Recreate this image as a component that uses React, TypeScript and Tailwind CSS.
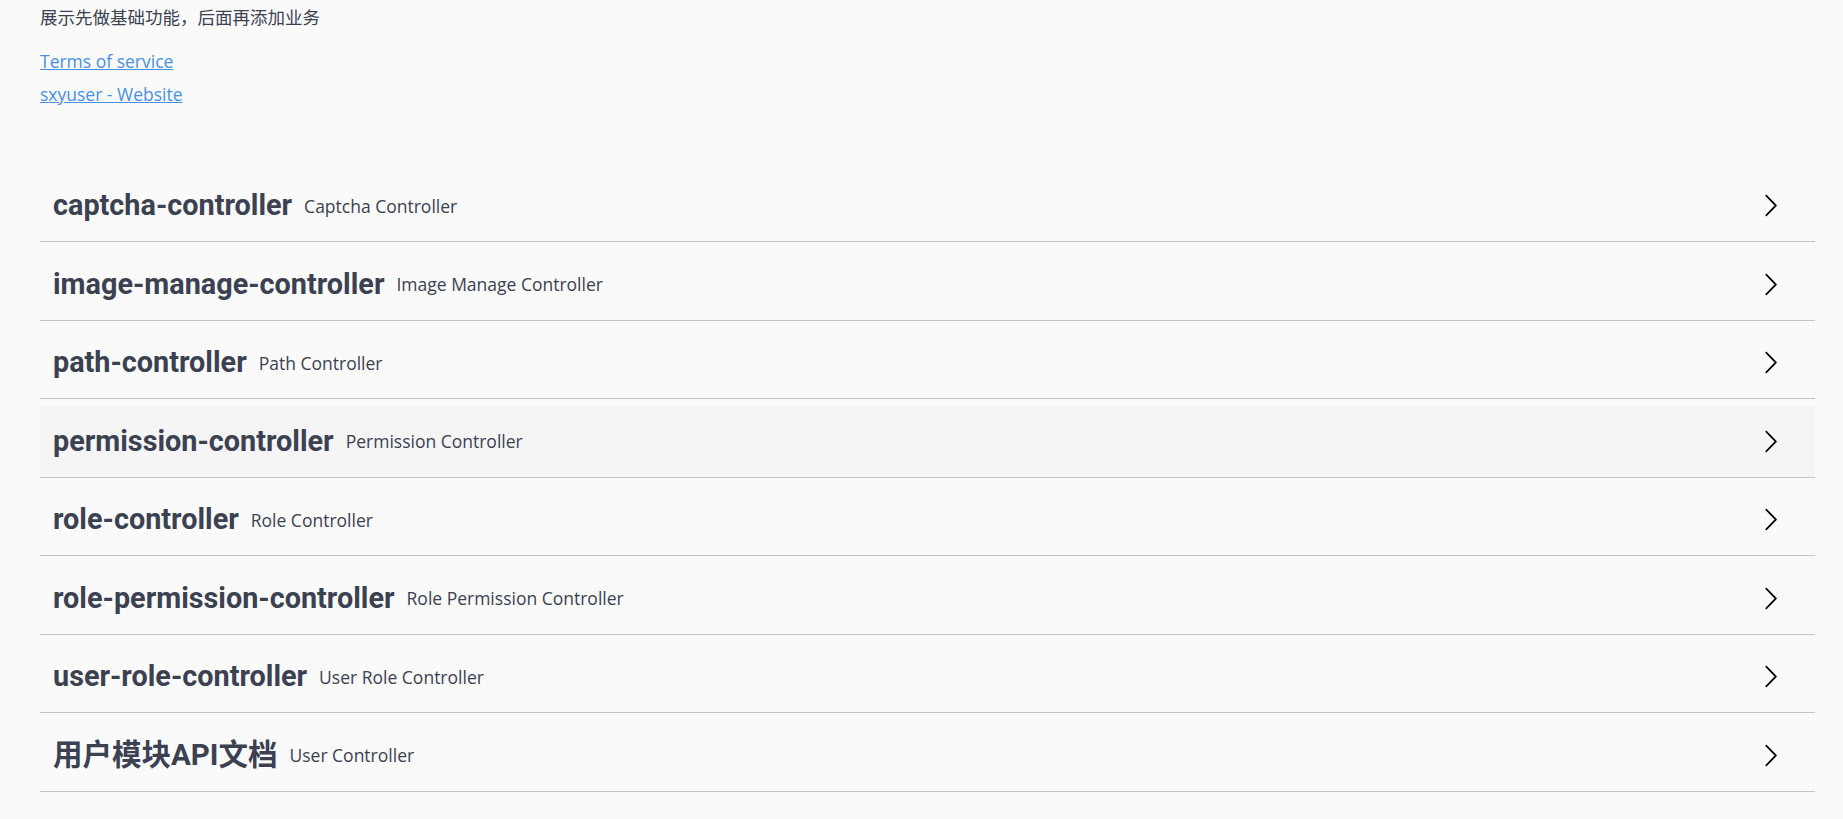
import React from 'react';

const tags = [
  { name: 'captcha-controller', desc: 'Captcha Controller' },
  { name: 'image-manage-controller', desc: 'Image Manage Controller' },
  { name: 'path-controller', desc: 'Path Controller' },
  { name: 'permission-controller', desc: 'Permission Controller', hover: true },
  { name: 'role-controller', desc: 'Role Controller' },
  { name: 'role-permission-controller', desc: 'Role Permission Controller' },
  { name: 'user-role-controller', desc: 'User Role Controller' },
  { name: '用户模块API文档', desc: 'User Controller', cjk: true },
];

function Arrow() {
  return (
    <svg width="25" height="25" viewBox="0 0 20 20" className="shrink-0">
      <path
        fill="#000"
        d="M13.25 10L6.109 2.58c-.268-.27-.268-.707 0-.979.268-.27.701-.27.969 0l7.83 7.908c.268.271.268.709 0 .979l-7.83 7.908c-.268.271-.701.27-.969 0-.268-.269-.268-.707 0-.979L13.25 10z"
      />
    </svg>
  );
}

export default function App() {
  return (
    <div className="min-h-screen bg-[#fafafa] pl-[40px] pr-[28px] text-[#3b4151] font-['Open_Sans','Noto_Sans_CJK_SC',sans-serif]">
      <div className="pt-[4px] text-[17.5px] leading-[26px]">
        <p>展示先做基础功能，后面再添加业务</p>
        <div className="mt-[18px]"><a href="#" className="text-[#4990e2] underline">Terms of service</a></div>
        <div className="mt-[7px]"><a href="#" className="text-[#4990e2] underline">sxyuser - Website</a></div>
      </div>
      <div className="mt-[63px]">
        {tags.map((t) => (
          <div key={t.name} className={`mb-[6.25px] flex h-[72.25px] items-center border-b border-[#c4c5c9] pl-[13px] pr-[32px] ${t.hover ? 'bg-[#f5f5f5]' : ''}`}>
            <h3 className={`font-bold font-['Roboto','Noto_Sans_CJK_SC',sans-serif] ${t.cjk ? 'text-[29.5px]' : 'text-[28.8px]'}`}>{t.name}</h3>
            <small className="flex-1 px-[12px] text-[17.5px]">{t.desc}</small>
            <Arrow />
          </div>
        ))}
      </div>
    </div>
  );
}
